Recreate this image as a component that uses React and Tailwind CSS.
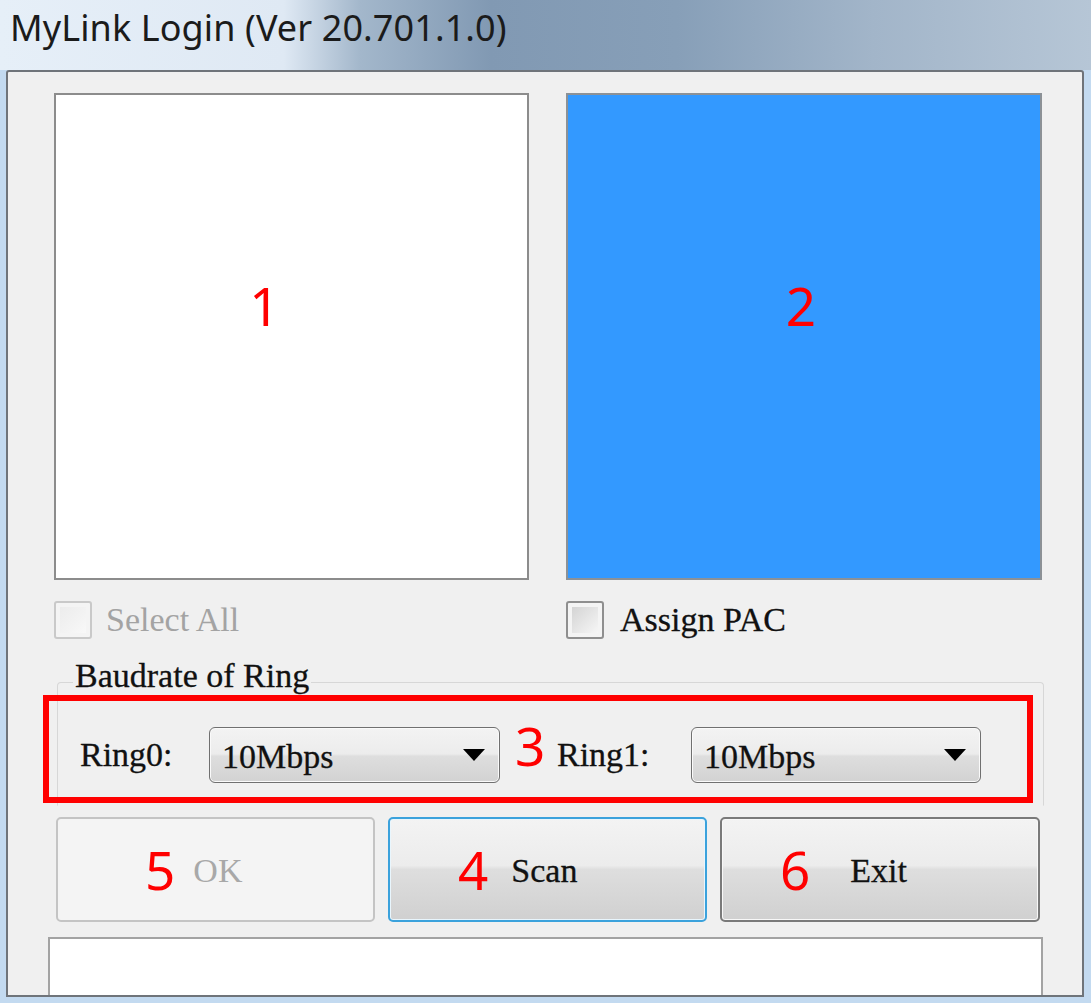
import React from "react";

const serif = { fontFamily: '"Liberation Serif", "Times New Roman", serif' };
const sans = { fontFamily: '"Noto Sans", "Open Sans", sans-serif' };

function Arrow() {
  return (
    <svg width="22" height="12" viewBox="0 0 22 12" className="shrink-0">
      <path d="M0 0 L22 0 L11 12 Z" fill="#000" />
    </svg>
  );
}

function Select({ w }) {
  return (
    <div
      className={`${w} h-[56px] rounded-[6px] border border-[#707070] bg-[linear-gradient(180deg,#f3f3f3_0%,#ececec_48%,#dedede_52%,#d2d2d2_100%)] flex items-center justify-between pl-[12px] pr-[14px] shadow-[inset_0_0_0_1px_#fafafa]`}
    >
      <span className="text-[34px] leading-none text-[#111] mt-[4px] [-webkit-text-stroke:0.3px_#111]" style={serif}>10Mbps</span>
      <Arrow />
    </div>
  );
}

function Checkbox({ disabled }) {
  return (
    <div
      className={`w-[38px] h-[38px] rounded-[3px] border-2 ${disabled ? "border-[#c9c9c9]" : "border-[#8f8f8f]"} bg-[#f4f4f4] flex items-center justify-center shrink-0`}
    >
      <div
        className={`w-[26px] h-[26px] ${disabled ? "bg-[linear-gradient(135deg,#ececec,#f8f8f8)]" : "bg-[linear-gradient(135deg,#d4d4d4,#f6f6f6)]"}`}
      />
    </div>
  );
}

function Num({ children, className = "" }) {
  return (
    <span className={`text-[53px] leading-none text-[#ff0000] ${className}`} style={sans}>
      {children}
    </span>
  );
}

export default function App() {
  return (
    <div className="w-[1091px] h-[1003px] overflow-hidden bg-[#c3daf0] flex flex-col">
      <div className="h-[70px] shrink-0 bg-[linear-gradient(90deg,#e6eff8_0%,#dfe9f4_26%,#a3b7cb_33%,#8199b3_45%,#879fb8_62%,#a2b5c9_80%,#b6c6d6_100%)] flex items-start pl-[10px]">
        <span
          className="text-[36px] leading-none text-[#1b1b1b] mt-[10px] tracking-[0.1px]"
          style={{ fontFamily: '"Noto Sans", "Open Sans", sans-serif' }}
        >
          MyLink Login (Ver 20.701.1.0)
        </span>
      </div>

      <div className="ml-[6px] w-[1078px] h-[927px] shrink-0 border-2 border-[#6f747a] rounded-t-[3px] bg-[#f0f0f0] flex flex-col overflow-hidden">
        <div className="flex gap-[37px] pl-[46px] pt-[21px]">
          <div className="w-[475px] h-[487px] border-2 border-[#8c8c8c] bg-white flex items-center justify-center pr-[54px] pb-[62px]">
            <Num>1</Num>
          </div>
          <div className="w-[476px] h-[487px] border-2 border-[#8c9196] bg-[#3399ff] flex items-center justify-center pr-[6px] pb-[62px]">
            <Num>2</Num>
          </div>
        </div>

        <div className="flex pl-[46px] mt-[20px] h-[40px] items-center">
          <div className="w-[512px] flex items-center gap-[14px]">
            <Checkbox disabled />
            <span className="text-[34px] leading-none text-[#a3a3a3]" style={serif}>Select All</span>
          </div>
          <div className="flex items-center gap-[16px]">
            <Checkbox />
            <span className="text-[34px] leading-none text-[#111] [-webkit-text-stroke:0.3px_#111]" style={serif}>Assign PAC</span>
          </div>
        </div>

        <div className="relative ml-[49px] mt-[42px] w-[987px] border border-[#d7d7d7] border-b-transparent rounded-t-[4px] pb-[2px]">
          <span
            className="absolute left-[15px] -top-[24px] px-[2px] bg-[#f0f0f0] text-[34px] leading-[34px] text-[#111] [-webkit-text-stroke:0.3px_#111]"
            style={serif}
          >
            Baudrate of Ring
          </span>
          <div className="mt-[12px] -ml-[15px] w-[990px] h-[108px] border-[6px] border-[#ff0000] flex items-center pl-[31px] pt-[12px]">
            <span className="w-[129px] shrink-0 text-[34px] leading-none text-[#111] [-webkit-text-stroke:0.3px_#111]" style={serif}>Ring0:</span>
            <Select w="w-[291px] shrink-0" />
            <span className="w-[57px] shrink-0 pl-[15px] -mt-[20px]">
              <Num>3</Num>
            </span>
            <span className="w-[134px] shrink-0 text-[34px] leading-none text-[#111] [-webkit-text-stroke:0.3px_#111]" style={serif}>Ring1:</span>
            <Select w="w-[290px] shrink-0" />
          </div>
        </div>

        <div className="flex gap-[13px] pl-[48px] mt-[11px]">
          <div className="w-[319px] h-[105px] rounded-[5px] border-2 border-[#c4c4c4] bg-[#f4f4f4] flex items-center pl-[87px] gap-[18px]">
            <Num>5</Num>
            <span className="text-[34px] leading-none text-[#a8a8a8] mt-[2px]" style={serif}>OK</span>
          </div>
          <div className="w-[319px] h-[105px] rounded-[5px] border-2 border-[#3ba2dc] bg-[linear-gradient(180deg,#f3f3f3_0%,#ececec_46%,#dedede_50%,#d0d0d0_100%)] shadow-[inset_0_0_0_1px_#e9f6fd] flex items-center pl-[68px] gap-[23px]">
            <Num>4</Num>
            <span className="text-[34px] leading-none text-[#111] mt-[2px] [-webkit-text-stroke:0.3px_#111]" style={serif}>Scan</span>
          </div>
          <div className="w-[320px] h-[105px] rounded-[5px] border-2 border-[#7a7a7a] bg-[linear-gradient(180deg,#f3f3f3_0%,#ececec_46%,#dedede_50%,#d0d0d0_100%)] shadow-[inset_0_0_0_1px_#f8f8f8] flex items-center pl-[58px] gap-[40px]">
            <Num>6</Num>
            <span className="text-[34px] leading-none text-[#111] mt-[2px] [-webkit-text-stroke:0.3px_#111]" style={serif}>Exit</span>
          </div>
        </div>

        <div className="ml-[40px] mt-[15px] w-[995px] flex-1 border-2 border-b-0 border-[#a3a3a3] bg-white" />
      </div>
    </div>
  );
}
